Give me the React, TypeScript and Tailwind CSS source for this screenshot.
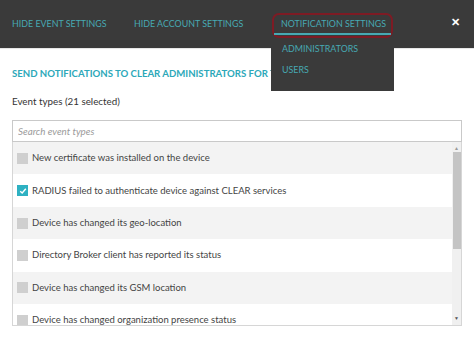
import { useState } from "react";

const events = [
  { label: "New certificate was installed on the device", checked: false },
  { label: "RADIUS failed to authenticate device against CLEAR services", checked: true },
  { label: "Device has changed its geo-location", checked: false },
  { label: "Directory Broker client has reported its status", checked: false },
  { label: "Device has changed its GSM location", checked: false },
  { label: "Device has changed organization presence status", checked: false },
];

function Checkbox({ checked }: { checked: boolean }) {
  if (checked) {
    return (
      <span className="flex h-[11px] w-[11px] shrink-0 items-center justify-center bg-[#2eb1c2]">
        <svg width="8" height="8" viewBox="0 0 8 8">
          <path d="M1.2 4.2 L3.2 6 L6.8 1.8" stroke="#fff" strokeWidth="1.4" fill="none" />
        </svg>
      </span>
    );
  }
  return <span className="h-[11px] w-[11px] shrink-0 bg-[#cfcfcf]" />;
}

export default function App() {
  const [query, setQuery] = useState("");

  return (
    <div className="h-[338px] w-[474px] overflow-hidden bg-white font-['Lato',sans-serif]">
      <div className="h-[49px] border-b border-[#e6e6e6] bg-[#3a3a3a]">
        <div className="flex h-[48px] items-start whitespace-nowrap pt-[13px] text-[8.9px] text-[#47a9b3]">
          <span className="ml-[12px] w-[122px] pt-[4px]">HIDE EVENT SETTINGS</span>
          <span className="w-[138px] pt-[4px]">HIDE ACCOUNT SETTINGS</span>
          <div className="relative w-[121px]">
            <div className="relative z-20 h-[25px] rounded-[7px] border-2 border-[#7e1b24]">
              <span className="block border-b-2 border-[#47a9b3] pb-[3px] pl-[7px] pt-[2px]">NOTIFICATION SETTINGS</span>
            </div>
            <div className="absolute left-[-1px] top-[20px] z-10 flex h-[58px] w-[123px] flex-col gap-[8px] bg-[#3a3a3a] pl-[11px] pt-[9px]">
              <span>ADMINISTRATORS</span>
              <span>USERS</span>
            </div>
          </div>
          <span className="ml-auto mr-[14px] pt-[1px] text-[11px] font-bold text-white">✕</span>
        </div>
      </div>

      <div className="px-[12px] pt-[18px]">
        <div className="text-[9.6px] font-bold text-[#2ca8b9]">
          SEND NOTIFICATIONS TO CLEAR ADMINISTRATORS FOR THE
        </div>
        <div className="mt-[13px] text-[9.8px] text-[#333]">Event types (21 selected)</div>

        <input
          value={query}
          onChange={(e) => setQuery(e.target.value)}
          placeholder="Search event types"
          className="mt-[11px] h-[22px] w-[450px] border border-[#c9c9c9] px-[5px] text-[9.8px] italic outline-none placeholder:text-[#9a9a9a]"
        />

        <div className="flex h-[184px] w-[450px] border border-t-0 border-[#d6d6d6]">
          <div className="flex-1 overflow-hidden">
            {events.map((e, i) => (
              <div
                key={e.label}
                className={
                  "flex h-[32.4px] items-center gap-[4px] pl-[4px] text-[9.5px] text-[#444] " +
                  (i % 2 === 0 ? "bg-[#f3f3f3]" : "bg-white")
                }
              >
                <Checkbox checked={e.checked} />
                <span>{e.label}</span>
              </div>
            ))}
          </div>
          <div className="flex w-[9px] flex-col items-center bg-[#f0f0f0]">
            <span className="mt-[3px] text-[5px] leading-[6px] text-[#999]">▲</span>
            <div className="mt-[1px] h-[97px] w-[8px] bg-[#c4c4c4]" />
            <span className="mb-[4px] mt-auto text-[5px] leading-[6px] text-[#555]">▼</span>
          </div>
        </div>
      </div>
    </div>
  );
}
